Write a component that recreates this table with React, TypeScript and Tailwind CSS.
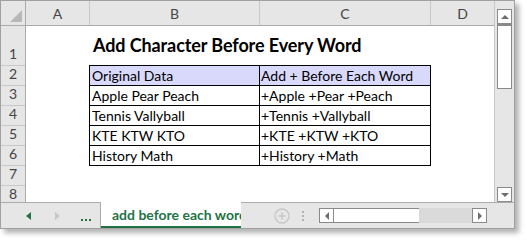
const rows = [
  ["Original Data", "Add + Before Each Word"],
  ["Apple Pear Peach", "+Apple +Pear +Peach"],
  ["Tennis Vallyball", "+Tennis +Vallyball"],
  ["KTE KTW KTO", "+KTE +KTW +KTO"],
  ["History Math", "+History +Math"],
];

const rowHeads = [
  { n: "1", h: "h-[40px]" },
  { n: "2", h: "h-[20px]" },
  { n: "3", h: "h-[20px]" },
  { n: "4", h: "h-[20px]" },
  { n: "5", h: "h-[20px]" },
  { n: "6", h: "h-[20px]" },
  { n: "7", h: "h-[20px]" },
  { n: "8", h: "h-[20px]" },
];

function ScrollButton({ dir }: { dir: "up" | "down" | "left" | "right" }) {
  const tri =
    dir === "up"
      ? "border-l-[4px] border-r-[4px] border-b-[4px] border-l-transparent border-r-transparent border-b-[#6d6d6d]"
      : dir === "down"
      ? "border-l-[4px] border-r-[4px] border-t-[4px] border-l-transparent border-r-transparent border-t-[#6d6d6d]"
      : dir === "left"
      ? "border-t-[4px] border-b-[4px] border-r-[4px] border-t-transparent border-b-transparent border-r-[#6d6d6d]"
      : "border-t-[4px] border-b-[4px] border-l-[4px] border-t-transparent border-b-transparent border-l-[#6d6d6d]";
  return (
    <div className="w-[15px] h-[15px] border border-[#8a8a8a] bg-white flex items-center justify-center">
      <div className={`w-0 h-0 ${tri}`} />
    </div>
  );
}

export default function App() {
  return (
    <div
      className="w-[527px] h-[241px] bg-white overflow-hidden"
      style={{ fontFamily: "Lato, 'Liberation Sans', sans-serif" }}
    >
      <div className="w-[515px] h-[229px] border border-[#a0a0a0] shadow-[4px_4px_5px_rgba(0,0,0,0.3)] flex flex-col bg-white">
        <div className="flex h-[201px]">
          {/* sheet */}
          <div className="w-[493px] flex flex-col">
            {/* column header */}
            <div className="flex h-[25px] bg-[#e6e6e6] border-b border-[#ababab] text-[14px] text-[#444]">
              <div className="w-[25px] border-r border-[#ababab] flex items-end justify-end pr-[3px] pb-[3px]">
                <div className="w-0 h-0 border-l-[12px] border-b-[12px] border-l-transparent border-b-[#b8b8b8]" />
              </div>
              <div className="w-[64px] border-r border-[#c8c8c8] flex items-center justify-center">A</div>
              <div className="w-[170px] border-r border-[#c8c8c8] flex items-center justify-center">B</div>
              <div className="w-[171px] border-r border-[#c8c8c8] flex items-center justify-center">C</div>
              <div className="flex-1 flex items-center justify-center">D</div>
            </div>
            <div className="flex flex-1 overflow-hidden">
              {/* row headers */}
              <div className="w-[25px] bg-[#e6e6e6] border-r border-[#ababab] flex flex-col text-[14px] text-[#444]">
                {rowHeads.map((r) => (
                  <div
                    key={r.n}
                    className={`${r.h} shrink-0 border-b border-[#c8c8c8] flex items-end justify-center pb-[1px]`}
                  >
                    {r.n}
                  </div>
                ))}
              </div>
              {/* cells */}
              <div className="flex-1 flex flex-col text-black">
                <div className="h-[39px] pl-[67px] flex items-end pb-[6px] text-[18px] font-bold tracking-[-0.1px]">
                  Add Character Before Every Word
                </div>
                <div className="ml-[63px] w-[342px] border-t border-black text-[14px]">
                  {rows.map((r, i) => (
                    <div
                      key={r[0]}
                      className={`flex h-[20px] border-b border-black ${i === 0 ? "bg-[#d9d9fb]" : ""}`}
                    >
                      <div className="w-[171px] border-l border-r border-black pl-[2px] leading-[20px] whitespace-nowrap">
                        {r[0]}
                      </div>
                      <div className="w-[171px] border-r border-black pl-[1px] leading-[20px] whitespace-nowrap">
                        {r[1]}
                      </div>
                    </div>
                  ))}
                </div>
              </div>
            </div>
          </div>
          {/* vertical scrollbar */}
          <div className="w-[20px] bg-[#e6e6e6] border-l border-[#c8c8c8] flex flex-col items-center pt-[8px] pb-[0px]">
            <ScrollButton dir="up" />
            <div className="w-[15px] h-[65px] border border-[#8a8a8a] border-t-[2px] bg-white" />
            <div className="flex-1" />
            <ScrollButton dir="down" />
          </div>
        </div>
        {/* tab bar */}
        <div className="flex h-[26px] bg-[#e6e6e6]">
          <div className="w-[100px] border-t border-r border-[#ababab] flex items-center pl-[25px]">
            <div className="w-0 h-0 border-t-[4px] border-b-[4px] border-r-[5px] border-t-transparent border-b-transparent border-r-[#217346]" />
            <div className="ml-[24px] w-0 h-0 border-t-[4px] border-b-[4px] border-l-[5px] border-t-transparent border-b-transparent border-l-[#c6c6c6]" />
            <div className="ml-[21px] flex gap-[2px] mt-[8px]">
              <div className="w-[2px] h-[2px] bg-[#217346]" />
              <div className="w-[2px] h-[2px] bg-[#217346]" />
              <div className="w-[2px] h-[2px] bg-[#217346]" />
            </div>
          </div>
          <div className="w-[140px] bg-white border-b-2 border-[#217346] overflow-hidden flex items-center pl-[11px] pt-[1px]">
            <span className="text-[14px] font-bold text-[#217346] whitespace-nowrap">add before each word</span>
          </div>
          <div className="flex-1 border-t border-[#ababab] flex items-center">
            <svg width="16" height="16" viewBox="0 0 16 16" className="ml-[33px]">
              <circle cx="8" cy="8" r="7" fill="none" stroke="#c6c6c6" strokeWidth="1.3" />
              <path d="M8 4.5v7M4.5 8h7" stroke="#c6c6c6" strokeWidth="1.5" />
            </svg>
            <div className="ml-[12px] flex flex-col gap-[2px]">
              <div className="w-[2px] h-[2px] bg-[#b0b0b0]" />
              <div className="w-[2px] h-[2px] bg-[#b0b0b0]" />
              <div className="w-[2px] h-[2px] bg-[#b0b0b0]" />
            </div>
            <div className="ml-[15px] flex items-center">
              <ScrollButton dir="left" />
              <div className="w-[85px] h-[15px] border-y border-[#8a8a8a] bg-white" />
              <div className="w-[53px] h-[15px] bg-[#dadada]" />
              <ScrollButton dir="right" />
            </div>
          </div>
        </div>
      </div>
    </div>
  );
}
